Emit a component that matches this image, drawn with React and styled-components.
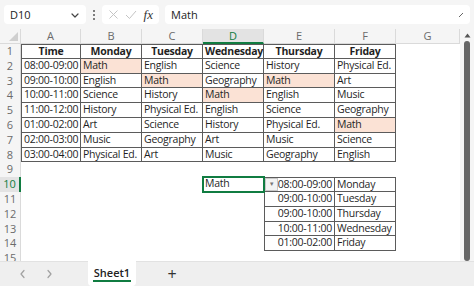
import React from "react";
import styled, { createGlobalStyle } from "styled-components";

const GlobalStyle = createGlobalStyle`
  html, body { margin: 0; padding: 0; background: #f5f5f5; }
  body { font-family: "Open Sans", "Noto Sans", sans-serif; color: #1f1f1f; }
  * { box-sizing: border-box; }
`;

const green = "#107c41";
const ink = "#5b5b5b";

const schedule = [
  ["08:00-09:00", "Math", "English", "Science", "History", "Physical Ed."],
  ["09:00-10:00", "English", "Math", "Geography", "Math", "Art"],
  ["10:00-11:00", "Science", "History", "Math", "English", "Music"],
  ["11:00-12:00", "History", "Physical Ed.", "English", "Science", "Geography"],
  ["01:00-02:00", "Art", "Science", "History", "Physical Ed.", "Math"],
  ["02:00-03:00", "Music", "Geography", "Art", "Music", "Science"],
  ["03:00-04:00", "Physical Ed.", "Art", "Music", "Geography", "English"],
];

const lookup = [
  ["08:00-09:00", "Monday"],
  ["09:00-10:00", "Tuesday"],
  ["09:00-10:00", "Thursday"],
  ["10:00-11:00", "Wednesday"],
  ["01:00-02:00", "Friday"],
];

const days = ["Time", "Monday", "Tuesday", "Wednesday", "Thursday", "Friday"];
const letters = ["A", "B", "C", "D", "E", "F", "G"];

const Page = styled.div`
  width: 474px;
  height: 286px;
  display: flex;
  flex-direction: column;
  overflow: hidden;
`;

const TopBar = styled.div`
  height: 29px;
  display: flex;
  align-items: center;
  padding: 0 4px;
  gap: 6px;
`;

const Box = styled.div`
  height: 19px;
  background: #fff;
  border-radius: 4px;
  display: flex;
  align-items: center;
  font-size: 11px;
  color: #222;
`;

const NameBox = styled(Box)`
  width: 82px;
  padding: 0 6px;
  justify-content: space-between;
`;

const Dots = styled.div`
  width: 4px;
  display: flex;
  flex-direction: column;
  align-items: center;
  gap: 2px;
  span { width: 2px; height: 2px; background: #555; border-radius: 1px; }
`;

const FxBox = styled(Box)`
  width: 57px;
  padding: 0 6px;
  gap: 6px;
  justify-content: space-between;
`;

const Fx = styled.span`
  font-family: "Liberation Serif", serif;
  font-style: italic;
  font-size: 13px;
  color: #333;
`;

const FormulaInput = styled(Box)`
  flex: 1;
  padding: 0 6px;
  justify-content: space-between;
`;

const Main = styled.div`
  height: 232px;
  display: flex;
  overflow: hidden;
`;

const Sheet = styled.div`
  flex: 1;
  display: grid;
  grid-template-columns: 21px 60px 61px 61px 61px 71px 61px 1fr;
  grid-template-rows: 15px repeat(15, 14.8px);
  background: #fff;
  align-content: start;
`;

const ColHead = styled.div`
  background: ${(p) => (p.$active ? "#e3e3e3" : "#f5f5f5")};
  color: ${(p) => (p.$active ? green : "#6b6b6b")};
  border-right: 1px solid #dadada;
  border-bottom: ${(p) => (p.$active ? `2px solid ${green}` : "1px solid #dadada")};
  font-size: 11px;
  line-height: 14px;
  text-align: center;
`;

const Corner = styled.div`
  background: #f5f5f5;
  border-right: 1px solid #dadada;
  border-bottom: 1px solid #dadada;
  position: relative;
  &::after {
    content: "";
    position: absolute;
    right: 2px;
    bottom: 2px;
    border-style: solid;
    border-width: 0 0 9px 9px;
    border-color: transparent transparent #cfcfcf transparent;
  }
`;

const RowHead = styled.div`
  background: ${(p) => (p.$active ? "#e3e3e3" : "#f5f5f5")};
  color: ${(p) => (p.$active ? green : "#6b6b6b")};
  border-right: ${(p) => (p.$active ? `2px solid ${green}` : "1px solid #dadada")};
  font-size: 11px;
  line-height: 14.8px;
  text-align: center;
`;

const Cell = styled.div`
  position: relative;
  font-size: 10.5px;
  letter-spacing: -0.25px;
  line-height: 13.8px;
  padding: 0 2px;
  white-space: nowrap;
  overflow: hidden;
  font-weight: ${(p) => (p.$bold ? 700 : 400)};
  text-align: ${(p) => p.$align || "left"};
  background: ${(p) => (p.$hl ? "#fbe2d5" : "#fff")};
  border-right: ${(p) => (p.$b ? `1px solid ${ink}` : "none")};
  border-bottom: ${(p) => (p.$b ? `1px solid ${ink}` : "none")};
  border-left: ${(p) => (p.$bl ? `1px solid ${ink}` : "none")};
  border-top: ${(p) => (p.$bt ? `1px solid ${ink}` : "none")};
  outline: ${(p) => (p.$selected ? `2px solid ${green}` : "none")};
  outline-offset: -1px;
  z-index: ${(p) => (p.$selected ? 2 : 0)};
`;

const DropButton = styled.div`
  position: absolute;
  left: 0;
  top: 0;
  width: 13px;
  height: 13px;
  background: #f3f3f3;
  border: 1px solid #c8c8c8;
  font-size: 6px;
  line-height: 11px;
  color: #777;
  text-align: center;
`;

const ScrollBar = styled.div`
  width: 14px;
  background: #f5f5f5;
  display: flex;
  flex-direction: column;
  align-items: center;
  padding-top: 4px;
  gap: 3px;
`;

const Thumb = styled.div`
  width: 6px;
  flex: 1;
  background: #666;
  border-radius: 3px;
`;

const TabBar = styled.div`
  height: 25px;
  display: flex;
  align-items: stretch;
  background: #efefef;
  border-top: 1px solid #e2e2e2;
  font-size: 11px;
`;

const Nav = styled.div`
  width: 88px;
  display: flex;
  align-items: center;
  padding-left: 18px;
  gap: 16px;
  color: #9a9a9a;
`;

const Tab = styled.div`
  width: 48px;
  margin-top: -1px;
  background: #fff;
  border-radius: 0 0 4px 4px;
  display: flex;
  flex-direction: column;
  align-items: center;
  justify-content: center;
  font-weight: 600;
  color: #222;
  span {
    border-bottom: 2px solid ${green};
    line-height: 14px;
    padding: 0 1px;
  }
`;

const AddTab = styled.div`
  width: 72px;
  display: flex;
  align-items: center;
  justify-content: center;
  font-size: 16px;
  color: #333;
`;

const Chevron = ({ dir = "down", color = "#444" }) => {
  const d = {
    down: "M2 4l3 3 3-3",
    left: "M6 1.5L3 5l3 3.5",
    right: "M4 1.5L7 5l-3 3.5",
  }[dir];
  return (
    <svg width="10" height="10" viewBox="0 0 10 10">
      <path d={d} fill="none" stroke={color} strokeWidth="1.2" strokeLinecap="round" strokeLinejoin="round" />
    </svg>
  );
};

const isMath = (v) => v === "Math";

export default function App() {
  const rows = [];
  for (let r = 1; r <= 15; r++) {
    const cells = [];
    for (let c = 0; c < 7; c++) {
      let props = {};
      let text = "";
      if (r === 1 && c < 6) {
        text = days[c];
        props = { $b: true, $bold: true, $align: "center", $bt: true, $bl: c === 0 };
      } else if (r >= 2 && r <= 8 && c < 6) {
        text = schedule[r - 2][c];
        props = { $b: true, $bl: c === 0, $hl: c > 0 && isMath(text) };
      } else if (r === 10 && c === 3) {
        text = "Math";
        props = { $selected: true };
      } else if (r >= 10 && r <= 14 && (c === 4 || c === 5)) {
        const row = lookup[r - 10];
        text = c === 4 ? row[0] : row[1];
        props = { $b: true, $bl: c === 4, $bt: r === 10, $align: c === 4 ? "right" : "left" };
      }
      cells.push(
        <Cell key={c} {...props}>
          {r === 10 && c === 4 && <DropButton>▼</DropButton>}
          {text}
        </Cell>
      );
    }
    rows.push(
      <React.Fragment key={r}>
        <RowHead $active={r === 10}>{r}</RowHead>
        {cells}
      </React.Fragment>
    );
  }

  return (
    <Page>
      <GlobalStyle />
      <TopBar>
        <NameBox>
          <span>D10</span>
          <Chevron />
        </NameBox>
        <Dots>
          <span />
          <span />
          <span />
        </Dots>
        <FxBox>
          <svg width="11" height="11" viewBox="0 0 11 11">
            <path d="M1.5 1.5l8 8M9.5 1.5l-8 8" stroke="#c4c4c4" strokeWidth="1" />
          </svg>
          <svg width="12" height="11" viewBox="0 0 12 11">
            <path d="M1 6l3.5 3.5L11 2" fill="none" stroke="#c4c4c4" strokeWidth="1" />
          </svg>
          <Fx>fx</Fx>
        </FxBox>
        <FormulaInput>
          <span>Math</span>
          <svg width="6" height="6" viewBox="0 0 6 6">
            <path d="M1 5L5 1" stroke="#666" strokeWidth="1" />
          </svg>
        </FormulaInput>
      </TopBar>
      <Main>
        <Sheet>
          <Corner />
          {letters.map((l) => (
            <ColHead key={l} $active={l === "D"}>
              {l}
            </ColHead>
          ))}
          {rows}
        </Sheet>
        <ScrollBar>
          <svg width="7" height="5" viewBox="0 0 7 5">
            <path d="M3.5 0.5L6.5 4.5H0.5Z" fill="#555" />
          </svg>
          <Thumb />
        </ScrollBar>
      </Main>
      <TabBar>
        <Nav>
          <Chevron dir="left" color="#a0a0a0" />
          <Chevron dir="right" color="#a0a0a0" />
        </Nav>
        <Tab>
          <span>Sheet1</span>
        </Tab>
        <AddTab>+</AddTab>
      </TabBar>
    </Page>
  );
}
